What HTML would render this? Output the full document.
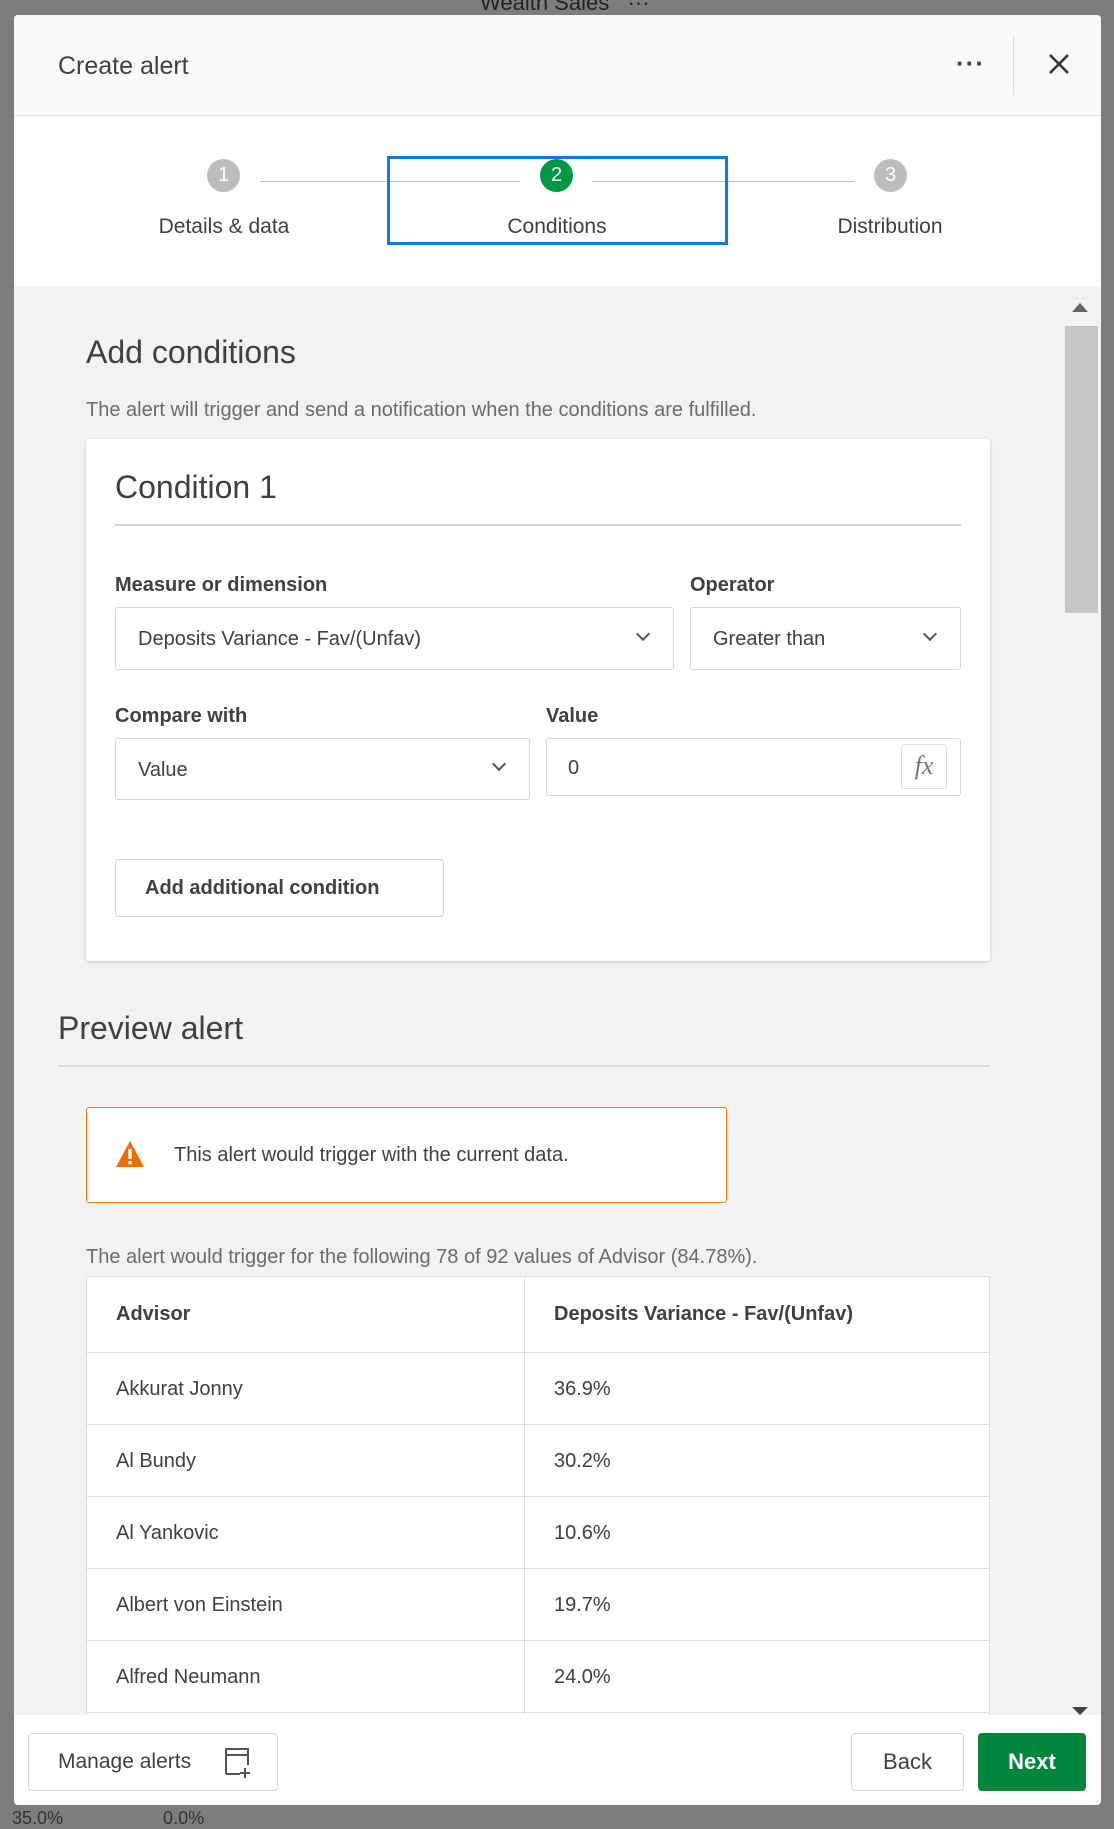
<!DOCTYPE html>
<html><head><meta charset="utf-8"><style>
*{margin:0;padding:0;box-sizing:border-box}
body{width:1114px;height:1817px;background:#7d7d7d;position:relative;overflow:hidden;font-family:"Liberation Sans",sans-serif;color:#404040}
.a{position:absolute;white-space:nowrap}
.modal{position:absolute;left:14px;top:15px;width:1087px;height:1790px;background:#fff;border-radius:4px;overflow:hidden}
.t{font-size:20px;line-height:24px}
.b{font-weight:bold;font-size:20px}
.box{position:absolute;background:#fff;border:1px solid #d6d6d6;border-radius:3px}
.chev{position:absolute;width:10px;height:10px;border-right:2px solid #555;border-bottom:2px solid #555;transform:rotate(45deg)}
.row{position:absolute;left:0;width:903px;border-top:1px solid #ddd;height:72px}
</style></head><body>
<div class="a" style="left:480px;top:-10px;font-size:22px;color:#222">Wealth Sales &nbsp; ···</div>
<div class="modal">
 <div class="a" style="left:0;top:0;width:1087px;height:101px;background:#f9f9f9;border-bottom:1px solid #ddd"></div>
 <div class="a" style="left:44px;top:37px;font-size:25px;color:#404040">Create alert</div>
 <div class="a" style="left:942px;top:33px;font-size:26px;font-weight:bold;letter-spacing:1px">···</div>
 <div class="a" style="left:999px;top:20px;width:1px;height:60px;background:#ddd"></div>
 <svg class="a" style="left:1034px;top:38px" width="22" height="22"><path d="M2 2L20 20M20 2L2 20" stroke="#333" stroke-width="2.6"/></svg>
 <div class="a" style="left:246px;top:166px;width:260px;height:1px;background:#bbb"></div>
 <div class="a" style="left:578px;top:166px;width:262px;height:1px;background:#bbb"></div>
 <div class="a" style="left:373px;top:141px;width:341px;height:89px;border:3px solid #0d7ae2"></div>
 <div class="a" style="left:193px;top:144px;width:33px;height:33px;border-radius:50%;background:#bdbdbd;color:#fff;text-align:center;line-height:33px;font-size:20px">1</div>
 <div class="a" style="left:526px;top:144px;width:33px;height:33px;border-radius:50%;background:#009845;color:#fff;text-align:center;line-height:33px;font-size:20px">2</div>
 <div class="a" style="left:860px;top:144px;width:33px;height:33px;border-radius:50%;background:#bdbdbd;color:#fff;text-align:center;line-height:33px;font-size:20px">3</div>
 <div class="a t" style="left:110px;top:200px;width:200px;text-align:center;font-size:21px">Details &amp; data</div>
 <div class="a t" style="left:443px;top:200px;width:200px;text-align:center;font-size:21px">Conditions</div>
 <div class="a t" style="left:776px;top:200px;width:200px;text-align:center;font-size:21px">Distribution</div>
 <div class="a" style="left:0;top:271px;width:1087px;height:1429px;background:#f2f2f2;overflow:hidden">
  <svg class="a" style="left:1058px;top:16px" width="16" height="10"><path d="M0 10L8 1L16 10Z" fill="#666"/></svg>
  <div class="a" style="left:1051px;top:40px;width:33px;height:287px;background:#c6c6c6"></div>
  <svg class="a" style="left:1058px;top:1421px" width="16" height="8"><path d="M0 0L8 8L16 0Z" fill="#444"/></svg>
  <div class="a" style="left:72px;top:48px;font-size:32px;color:#404040">Add conditions</div>
  <div class="a" style="left:72px;top:113px;font-size:20px;color:#6b6b6b">The alert will trigger and send a notification when the conditions are fulfilled.</div>
  <div class="a" style="left:72px;top:153px;width:904px;height:522px;background:#fff;border-radius:3px;box-shadow:0 1px 3px rgba(0,0,0,.2)">
   <div class="a" style="left:29px;top:30px;font-size:32px">Condition 1</div>
   <div class="a" style="left:29px;top:85px;width:846px;height:2px;background:#d6d6d6"></div>
   <div class="a b" style="left:29px;top:135px">Measure or dimension</div>
   <div class="a b" style="left:604px;top:135px">Operator</div>
   <div class="box" style="left:29px;top:168px;width:559px;height:63px"><div class="a t" style="left:22px;top:19px">Deposits Variance - Fav/(Unfav)</div><div class="chev" style="left:522px;top:21px"></div></div>
   <div class="box" style="left:604px;top:168px;width:271px;height:63px"><div class="a t" style="left:22px;top:19px">Greater than</div><div class="chev" style="left:234px;top:21px"></div></div>
   <div class="a b" style="left:29px;top:266px">Compare with</div>
   <div class="a b" style="left:460px;top:266px">Value</div>
   <div class="box" style="left:29px;top:299px;width:415px;height:62px"><div class="a t" style="left:22px;top:19px">Value</div><div class="chev" style="left:378px;top:20px"></div></div>
   <div class="box" style="left:460px;top:299px;width:415px;height:58px"><div class="a t" style="left:21px;top:17px">0</div>
    <div class="a" style="left:354px;top:5px;width:46px;height:45px;border:1px solid #ddd;border-radius:3px;font-family:'Liberation Serif',serif;font-style:italic;font-size:26px;color:#777;text-align:center;line-height:42px">fx</div></div>
   <div class="box" style="left:29px;top:420px;width:329px;height:58px"><div class="a b" style="left:29px;top:17px">Add additional condition</div></div>
  </div>
  <div class="a" style="left:44px;top:724px;font-size:32px">Preview alert</div>
  <div class="a" style="left:44px;top:779px;width:932px;height:2px;background:#d9d9d9"></div>
  <div class="a" style="left:72px;top:821px;width:641px;height:96px;background:#fff;border:1px solid #ef7d1a;border-radius:3px">
   <svg class="a" style="left:28px;top:32px" width="30" height="28"><path d="M15 1L29 27H1Z" fill="#ef6c00"/><rect x="13.3" y="9" width="3.4" height="10" fill="#fff"/><rect x="13.3" y="21" width="3.4" height="3.4" fill="#fff"/></svg>
   <div class="a t" style="left:87px;top:35px">This alert would trigger with the current data.</div>
  </div>
  <div class="a" style="left:72px;top:960px;font-size:20px;color:#6b6b6b">The alert would trigger for the following 78 of 92 values of Advisor (84.78%).</div>
  <div class="a" style="left:72px;top:990px;width:904px;height:480px;background:#fff;border:1px solid #ddd">
   <div class="a" style="left:437px;top:0;width:1px;height:480px;background:#ddd"></div>
   <div class="a b" style="left:29px;top:26px">Advisor</div>
   <div class="a b" style="left:467px;top:26px">Deposits Variance - Fav/(Unfav)</div>
   <div class="row" style="top:75px"><div class="a t" style="left:29px;top:24px">Akkurat Jonny</div><div class="a t" style="left:467px;top:24px">36.9%</div></div>
   <div class="row" style="top:147px"><div class="a t" style="left:29px;top:24px">Al Bundy</div><div class="a t" style="left:467px;top:24px">30.2%</div></div>
   <div class="row" style="top:219px"><div class="a t" style="left:29px;top:24px">Al Yankovic</div><div class="a t" style="left:467px;top:24px">10.6%</div></div>
   <div class="row" style="top:291px"><div class="a t" style="left:29px;top:24px">Albert von Einstein</div><div class="a t" style="left:467px;top:24px">19.7%</div></div>
   <div class="row" style="top:363px"><div class="a t" style="left:29px;top:24px">Alfred Neumann</div><div class="a t" style="left:467px;top:24px">24.0%</div></div>
   <div class="row" style="top:435px"></div>
  </div>
 </div>
 <div class="a" style="left:14px;top:1718px;width:250px;height:58px;border:1px solid #d6d6d6;border-radius:4px">
  <div class="a t" style="left:29px;top:16px;font-size:21px">Manage alerts</div>
  <svg class="a" style="left:195px;top:13px" width="30" height="32"><path d="M2 27V2H24V18M2 8H24M2 27H16" fill="none" stroke="#555" stroke-width="2"/><path d="M21 21V31M16 26H26" stroke="#555" stroke-width="2"/></svg>
 </div>
 <div class="a" style="left:837px;top:1718px;width:113px;height:58px;border:1px solid #d6d6d6;border-radius:4px;text-align:center;line-height:56px;font-size:22px">Back</div>
 <div class="a" style="left:964px;top:1718px;width:108px;height:58px;background:#00873d;border-radius:4px;text-align:center;line-height:58px;font-size:22px;font-weight:bold;color:#fff">Next</div>
</div>
<div class="a" style="left:12px;top:1808px;font-size:18px;color:#333">35.0% &nbsp;&nbsp;&nbsp;&nbsp;&nbsp;&nbsp;&nbsp;&nbsp;&nbsp;&nbsp;&nbsp;&nbsp;&nbsp;&nbsp;&nbsp;&nbsp;&nbsp;&nbsp; 0.0%</div>
</body></html>
